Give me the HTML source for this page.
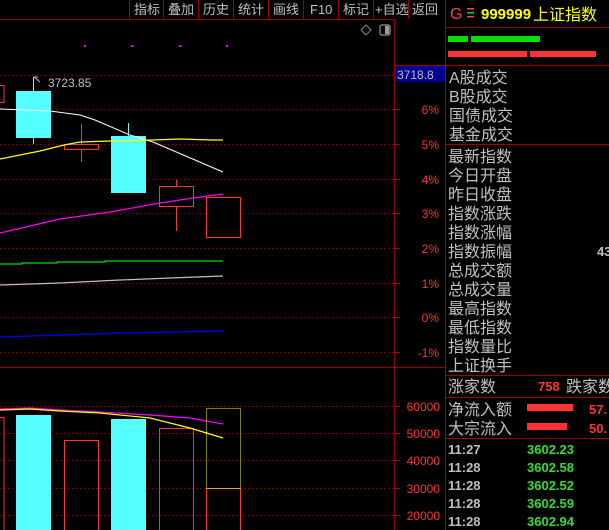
<!DOCTYPE html>
<html><head><meta charset="utf-8"><style>
html,body{margin:0;padding:0;background:#000;width:609px;height:530px;overflow:hidden}
svg{display:block}
text{font-family:"Liberation Sans","Noto Sans CJK SC",sans-serif}
.cn{fill:#c0c0c0;font-size:16px}
.tb{fill:#c0c0c0;font-size:13px}
.ax{fill:#ff3333;font-size:12px}
</style></head><body>
<svg width="609" height="530" viewBox="0 0 609 530" xmlns="http://www.w3.org/2000/svg">
<rect width="609" height="530" fill="#000"/>
<!-- toolbar -->
<g stroke="#a00000" stroke-width="1">
<line x1="0" y1="19.5" x2="395" y2="19.5"/>
<line x1="129.5" y1="0" x2="129.5" y2="19"/><line x1="163.5" y1="0" x2="163.5" y2="19"/>
<line x1="198.5" y1="0" x2="198.5" y2="19"/><line x1="233.5" y1="0" x2="233.5" y2="19"/>
<line x1="268.5" y1="0" x2="268.5" y2="19"/><line x1="303.5" y1="0" x2="303.5" y2="19"/>
<line x1="338.5" y1="0" x2="338.5" y2="19"/><line x1="373.5" y1="0" x2="373.5" y2="19"/>
<line x1="408.5" y1="0" x2="408.5" y2="19"/>
<line x1="394.5" y1="19" x2="394.5" y2="530"/>
<line x1="445.5" y1="0" x2="445.5" y2="530"/>
<line x1="395" y1="65.5" x2="446" y2="65.5"/>
<line x1="0" y1="367.5" x2="446" y2="367.5"/>
<line x1="446" y1="27.5" x2="609" y2="27.5"/>
<line x1="446" y1="65.5" x2="609" y2="65.5"/>
<line x1="446" y1="144.5" x2="609" y2="144.5"/>
<line x1="446" y1="375.5" x2="609" y2="375.5"/>
<line x1="446" y1="397.5" x2="609" y2="397.5"/>
<line x1="446" y1="438.5" x2="609" y2="438.5"/>
</g>
<g class="tb">
<text x="134" y="14">指标</text><text x="168" y="14">叠加</text><text x="203" y="14">历史</text>
<text x="238" y="14">统计</text><text x="273" y="14">画线</text><text x="310" y="14">F10</text>
<text x="343" y="14">标记</text><text x="375" y="14">+自选</text><text x="412" y="14">返回</text>
</g>
<!-- header -->
<text x="450" y="19" fill="#ff4040" font-size="16">G</text>
<rect x="467" y="8" width="7" height="1.5" fill="#ff4040"/><rect x="467" y="12" width="7" height="1.5" fill="#00e000"/><rect x="467" y="16" width="7" height="1.5" fill="#ff4040"/>
<text x="481" y="19" fill="#ffff00" font-size="15" font-weight="bold">999999</text>
<text x="533" y="20" fill="#ffff00" font-size="16">上证指数</text>
<rect x="448" y="36" width="20" height="6" fill="#00e000"/><rect x="471" y="36" width="69" height="6" fill="#00e000"/>
<rect x="448" y="51" width="79" height="6" fill="#ff3333"/><rect x="530" y="51" width="66" height="6" fill="#ff3333"/>
<!-- chart icons -->
<path d="M366 25 L371 30 L366 35 L361 30 Z" fill="none" stroke="#888" stroke-width="1"/>
<rect x="380" y="25" width="10" height="10" rx="2" fill="none" stroke="#999" stroke-width="1.2"/><rect x="385" y="26" width="4" height="8" fill="#999"/>
<g fill="#ff00ff"><rect x="84" y="45" width="2" height="2"/><rect x="131" y="45" width="2" height="2"/><rect x="179" y="45" width="2" height="2"/><rect x="226" y="45" width="2" height="2"/></g>
<!-- dotted grid -->
<g stroke="#a00000" stroke-dasharray="1,3" stroke-width="1">
<line x1="0" y1="75.5" x2="394" y2="75.5"/><line x1="0" y1="109.5" x2="394" y2="109.5"/>
<line x1="0" y1="144.5" x2="394" y2="144.5"/><line x1="0" y1="179.5" x2="394" y2="179.5"/>
<line x1="0" y1="213.5" x2="394" y2="213.5"/><line x1="0" y1="248.5" x2="394" y2="248.5"/>
<line x1="0" y1="283.5" x2="394" y2="283.5"/><line x1="0" y1="317.5" x2="394" y2="317.5"/>
<line x1="0" y1="352.5" x2="394" y2="352.5"/>
<line x1="0" y1="406.5" x2="394" y2="406.5"/><line x1="0" y1="433.5" x2="394" y2="433.5"/>
<line x1="0" y1="460.5" x2="394" y2="460.5"/><line x1="0" y1="488.5" x2="394" y2="488.5"/>
<line x1="0" y1="515.5" x2="394" y2="515.5"/>
</g>
<g stroke="#c00000"><line x1="395" y1="109.5" x2="400" y2="109.5"/><line x1="395" y1="144.5" x2="400" y2="144.5"/><line x1="395" y1="179.5" x2="400" y2="179.5"/><line x1="395" y1="213.5" x2="400" y2="213.5"/><line x1="395" y1="248.5" x2="400" y2="248.5"/><line x1="395" y1="283.5" x2="400" y2="283.5"/><line x1="395" y1="317.5" x2="400" y2="317.5"/><line x1="395" y1="352.5" x2="400" y2="352.5"/>
<line x1="395" y1="406.5" x2="400" y2="406.5"/><line x1="395" y1="433.5" x2="400" y2="433.5"/><line x1="395" y1="460.5" x2="400" y2="460.5"/><line x1="395" y1="488.5" x2="400" y2="488.5"/><line x1="395" y1="515.5" x2="400" y2="515.5"/></g>
<!-- axis labels -->
<g class="ax" text-anchor="end">
<text x="439" y="114">6%</text><text x="439" y="149">5%</text><text x="439" y="184">4%</text>
<text x="439" y="218">3%</text><text x="439" y="253">2%</text><text x="439" y="288">1%</text>
<text x="439" y="322">0%</text><text x="439" y="357">-1%</text>
<text x="440" y="411">60000</text><text x="440" y="438">50000</text><text x="440" y="465">40000</text>
<text x="440" y="493">30000</text><text x="440" y="520">20000</text>
</g>
<rect x="395" y="66" width="50" height="16" fill="#000090"/>
<text x="397" y="79" fill="#c0c0c0" font-size="12">3718.8</text>
<!-- candles -->
<rect x="-1" y="85.5" width="5" height="17" fill="none" stroke="#ff3333"/>
<line x1="33.5" y1="77" x2="33.5" y2="144" stroke="#55ffff"/>
<rect x="16" y="91" width="35" height="47" fill="#55ffff"/>
<path d="M34 77 L38 77 M34 77 L40 82" stroke="#c0c0c0" fill="none"/>
<text x="48" y="87" fill="#c0c0c0" font-size="12">3723.85</text>
<line x1="128.5" y1="123" x2="128.5" y2="136" stroke="#55ffff"/>
<rect x="111" y="136" width="35" height="57" fill="#55ffff"/>
<line x1="81.5" y1="124" x2="81.5" y2="162" stroke="#ff3333"/>
<rect x="64.5" y="144.5" width="34" height="5" fill="#000" stroke="#ff3333"/>
<line x1="176.5" y1="180" x2="176.5" y2="231" stroke="#ff3333"/>
<rect x="159.5" y="186.5" width="34" height="20" fill="#000" stroke="#ff3333"/>
<rect x="206.5" y="197.5" width="34" height="40" fill="#000" stroke="#ff3333"/>
<!-- MA lines -->
<polyline points="0,109 50,111 80,115 95,120 130,135 153,142 223,172" fill="none" stroke="#fff" stroke-width="1"/>
<polyline points="0,159 20,155 40,151 64,145 80,142 110,141 153,140 180,139 212,140 223,140" fill="none" stroke="#ffff00" stroke-width="1.2"/>
<polyline points="0,233 60,219 110,212 160,203 200,197 223,194" fill="none" stroke="#ff00ff" stroke-width="1.2"/>
<polyline points="0,264 22,264 22,263 57,263 57,262 105,262 105,261 223,261" fill="none" stroke="#00e000" stroke-width="1.2"/>
<polyline points="0,285 60,283 120,280 170,278 223,276" fill="none" stroke="#c0c0c0" stroke-width="1.2"/>
<polyline points="0,337 60,335 120,333 223,331" fill="none" stroke="#0000ff" stroke-width="1.2"/>
<!-- volume -->
<rect x="-1" y="417.5" width="5" height="120" fill="none" stroke="#ff3333"/>
<rect x="16" y="415" width="35" height="120" fill="#55ffff"/>
<rect x="64.5" y="440.5" width="34" height="100" fill="none" stroke="#ff3333"/>
<rect x="111" y="419" width="35" height="120" fill="#55ffff"/>
<rect x="159.5" y="428.5" width="34" height="110" fill="none" stroke="#ff3333"/>
<rect x="206.5" y="488.5" width="34" height="50" fill="none" stroke="#ff3333"/>
<rect x="206.5" y="408.5" width="34" height="80" fill="none" stroke="#ffff00" stroke-dasharray="1,1"/>
<polyline points="0,409 30,408 60,410 100,412 150,415 190,418 223,424" fill="none" stroke="#ff00ff" stroke-width="1.2"/>
<polyline points="0,410 30,409 60,411 100,413 150,418 190,428 223,438" fill="none" stroke="#ffff00" stroke-width="1.2"/>
<!-- right panel text -->
<g class="cn">
<text x="449" y="83">A股成交</text><text x="449" y="102">B股成交</text><text x="449" y="121">国债成交</text><text x="449" y="140">基金成交</text>
<text x="448" y="162">最新指数</text><text x="448" y="181">今日开盘</text><text x="448" y="200">昨日收盘</text>
<text x="448" y="219">指数涨跌</text><text x="448" y="238">指数涨幅</text><text x="448" y="257">指数振幅</text>
<text x="448" y="276">总成交额</text><text x="448" y="295">总成交量</text><text x="448" y="314">最高指数</text>
<text x="448" y="333">最低指数</text><text x="448" y="352">指数量比</text><text x="448" y="371">上证换手</text>
<text x="448" y="392">涨家数</text><text x="566" y="392">跌家数</text>
<text x="448" y="415">净流入额</text><text x="448" y="434">大宗流入</text>
</g>
<text x="597" y="256" fill="#c0c0c0" font-size="13" font-weight="bold">43</text>
<text x="538" y="391" fill="#ff3333" font-size="13" font-weight="bold">758</text>
<rect x="527" y="404" width="46" height="7" fill="#ff3333"/><rect x="527" y="423" width="40" height="7" fill="#ff3333"/>
<text x="589" y="414" fill="#ff3333" font-size="13" font-weight="bold">57.</text>
<text x="589" y="433" fill="#ff3333" font-size="13" font-weight="bold">50.</text>
<g font-size="13" font-weight="bold">
<text x="448" y="454" fill="#c0c0c0">11:27</text><text x="527" y="454" fill="#33dd33">3602.23</text>
<text x="448" y="472" fill="#c0c0c0">11:28</text><text x="527" y="472" fill="#33dd33">3602.58</text>
<text x="448" y="490" fill="#c0c0c0">11:28</text><text x="527" y="490" fill="#33dd33">3602.52</text>
<text x="448" y="508" fill="#c0c0c0">11:28</text><text x="527" y="508" fill="#33dd33">3602.59</text>
<text x="448" y="526" fill="#c0c0c0">11:28</text><text x="527" y="526" fill="#33dd33">3602.94</text>
</g>
</svg>
</body></html>
